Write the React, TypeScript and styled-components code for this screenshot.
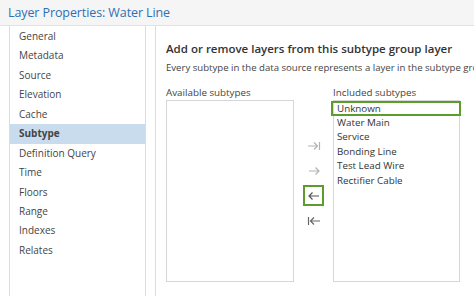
import React from 'react';
import styled, { createGlobalStyle } from 'styled-components';

const GlobalStyle = createGlobalStyle`
  html, body {
    margin: 0;
    padding: 0;
    background: #ffffff;
  }
  body {
    font-family: 'Open Sans', 'Noto Sans', sans-serif;
    color: #3c3c3c;
  }
`;

const Window = styled.div`
  width: 474px;
  height: 296px;
  overflow: hidden;
  background: #ffffff;
  display: flex;
  flex-direction: column;
`;

const Header = styled.div`
  height: 26px;
  flex: none;
  background: #f5f5f5;
  border-bottom: 1px solid #e2e2e2;
  box-sizing: border-box;
  padding-left: 8px;
  display: flex;
  align-items: center;
`;

const Title = styled.h1`
  margin: 0;
  font-size: 12.5px;
  font-weight: 400;
  color: #2f6fb4;
  letter-spacing: -0.1px;
`;

const Body = styled.div`
  flex: 1;
  display: flex;
  gap: 9px;
  padding-left: 9px;
  min-height: 0;
`;

const Nav = styled.ul`
  list-style: none;
  margin: 0;
  padding: 1px 0 0;
  width: 135px;
  flex: none;
  border: 1px solid #dcdcdc;
  border-top: none;
  border-bottom: none;
`;

const NavItem = styled.li<{ $active?: boolean }>`
  height: 19.45px;
  line-height: 19.45px;
  padding-left: 9px;
  font-size: 10px;
  color: #444;
  font-weight: ${(p) => (p.$active ? 700 : 400)};
  background: ${(p) => (p.$active ? '#c8dcee' : 'transparent')};
`;

const Content = styled.section`
  flex: 1;
  border-left: 1px solid #dcdcdc;
  padding: 15px 0 0 10px;
  min-width: 0;
  overflow: hidden;
`;

const Heading = styled.h2`
  margin: 0;
  font-size: 11.5px;
  font-weight: 600;
  color: #333;
  white-space: nowrap;
  line-height: 16px;
`;

const Description = styled.p`
  margin: 4px 0 0;
  font-size: 9.6px;
  color: #444;
  white-space: nowrap;
  line-height: 14px;
`;

const Picker = styled.div`
  display: flex;
  margin-top: 12px;
`;

const Column = styled.div`
  display: flex;
  flex-direction: column;
`;

const Label = styled.div`
  font-size: 9.8px;
  color: #444;
  height: 11px;
  line-height: 11px;
  margin-bottom: 2px;
`;

const ListBox = styled.div<{ $width: number }>`
  width: ${(p) => p.$width}px;
  height: 182px;
  flex: none;
  box-sizing: border-box;
  border: 1px solid #d6d6d6;
  padding: 0;
`;

const Option = styled.div<{ $focused?: boolean }>`
  height: 14.4px;
  line-height: 14.4px;
  font-size: 9.8px;
  color: #333;
  padding-left: 3px;
  box-sizing: border-box;
  ${(p) =>
    p.$focused &&
    `
    margin: 0 -2px 0 -3px;
    height: 15px;
    line-height: 11px;
    padding-left: 4px;
    border: 2px solid #5c9c2c;
  `}
`;

const Buttons = styled.div`
  width: 39px;
  display: flex;
  flex-direction: column;
  align-items: center;
  padding-top: 48px;
  gap: 4px;
`;

const MoveButton = styled.button<{ $focused?: boolean }>`
  width: 21px;
  height: 21px;
  padding: 0;
  background: transparent;
  border: 2px solid ${(p) => (p.$focused ? '#5c9c2c' : 'transparent')};
  display: flex;
  align-items: center;
  justify-content: center;
  color: ${(p) => (p.$focused ? '#555' : p.disabled ? '#b4b4b4' : '#666')};
`;

const Arrow = ({ dir, bar }: { dir: 'left' | 'right'; bar?: boolean }) => (
  <svg width="14" height="10" viewBox="0 0 14 10" fill="none" stroke="currentColor" strokeWidth="1.2">
    {dir === 'right' ? (
      <>
        <path d={bar ? 'M1 5h9.5M7 1.5L10.5 5 7 8.5' : 'M2 5h10M8.5 1.5L12 5 8.5 8.5'} />
        {bar && <path d="M12.5 1v8" />}
      </>
    ) : (
      <>
        <path d={bar ? 'M3.5 5H13M7 1.5L3.5 5 7 8.5' : 'M2 5h10M5.5 1.5L2 5l3.5 3.5'} />
        {bar && <path d="M1.5 1v8" />}
      </>
    )}
  </svg>
);

const navItems = [
  'General',
  'Metadata',
  'Source',
  'Elevation',
  'Cache',
  'Subtype',
  'Definition Query',
  'Time',
  'Floors',
  'Range',
  'Indexes',
  'Relates',
];

const included = ['Unknown', 'Water Main', 'Service', 'Bonding Line', 'Test Lead Wire', 'Rectifier Cable'];

const App: React.FC = () => (
  <>
    <GlobalStyle />
    <Window>
      <Header>
        <Title>Layer Properties: Water Line</Title>
      </Header>
      <Body>
        <Nav>
          {navItems.map((item) => (
            <NavItem key={item} $active={item === 'Subtype'}>
              {item}
            </NavItem>
          ))}
        </Nav>
        <Content>
          <Heading>Add or remove layers from this subtype group layer</Heading>
          <Description>Every subtype in the data source represents a layer in the subtype group</Description>
          <Picker>
            <Column>
              <Label>Available subtypes</Label>
              <ListBox $width={128} />
            </Column>
            <Buttons>
              <MoveButton disabled>
                <Arrow dir="right" bar />
              </MoveButton>
              <MoveButton disabled>
                <Arrow dir="right" />
              </MoveButton>
              <MoveButton $focused>
                <Arrow dir="left" />
              </MoveButton>
              <MoveButton>
                <Arrow dir="left" bar />
              </MoveButton>
            </Buttons>
            <Column>
              <Label>Included subtypes</Label>
              <ListBox $width={127}>
                {included.map((name, i) => (
                  <Option key={name} $focused={i === 0}>
                    {name}
                  </Option>
                ))}
              </ListBox>
            </Column>
          </Picker>
        </Content>
      </Body>
    </Window>
  </>
);

export default App;
